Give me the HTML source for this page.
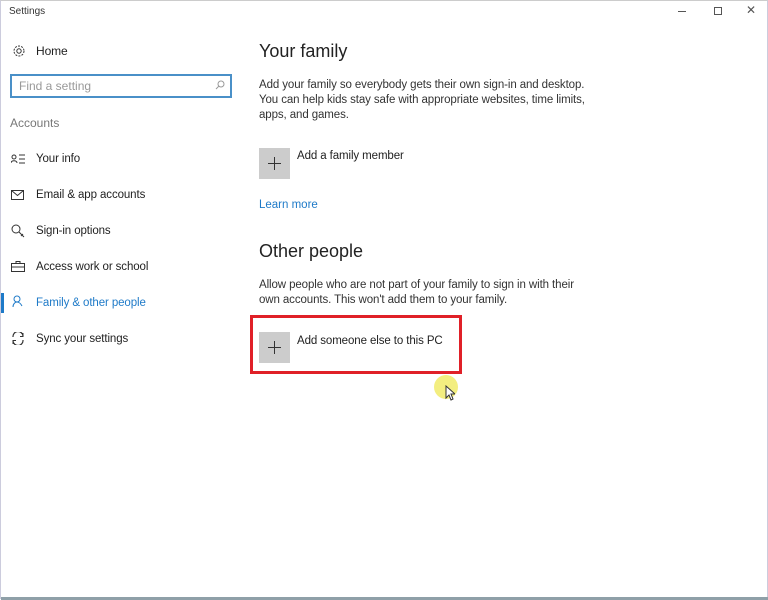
<!DOCTYPE html>
<html><head><style>
*{margin:0;padding:0;box-sizing:border-box}
body{width:768px;height:599px;background:#fff;font-family:"Liberation Sans",sans-serif;position:relative;overflow:hidden;color:#222;border-left:1px solid #ccd;border-right:1px solid #ccd;border-top:1px solid #ccc}
.a{position:absolute;white-space:nowrap}
.nav{font-size:11.5px;color:#222;letter-spacing:-0.1px}
.ic{position:absolute}
p.t{font-size:11.5px;line-height:15px;color:#333;letter-spacing:-0.1px}
.plus{position:absolute;width:31px;height:31px;background:#ccc}
.plus:before{content:"";position:absolute;left:9px;top:15px;width:13px;height:1px;background:#333}
.plus:after{content:"";position:absolute;left:15px;top:9px;width:1px;height:13px;background:#333}
</style></head><body>
<div class="a" style="left:8px;top:5px;font-size:10px;color:#333">Settings</div>
<div class="a" style="left:677px;top:10px;width:8px;height:1px;background:#555"></div>
<div class="a" style="left:713px;top:6px;width:8px;height:8px;border:1px solid #555"></div>
<div class="a" style="left:745px;top:2px;font-size:12px;color:#555">✕</div>

<svg class="ic" style="left:11px;top:43px" width="14" height="14" viewBox="0 0 14 14"><circle cx="7" cy="7" r="2.2" fill="none" stroke="#333"/><circle cx="7" cy="7" r="5" fill="none" stroke="#333" stroke-dasharray="2 1.2"/></svg>
<div class="a nav" style="left:35px;top:43px;font-size:12px">Home</div>
<div class="a" style="left:9px;top:73px;width:222px;height:24px;border:2px solid #4a90c8"></div>
<div class="a" style="left:18px;top:78px;font-size:12px;color:#999">Find a setting</div>
<svg class="ic" style="left:214px;top:79px" width="10" height="10" viewBox="0 0 10 10"><circle cx="6" cy="4" r="3" fill="none" stroke="#999"/><path d="M4 6L1 9" stroke="#999"/></svg>
<div class="a" style="left:9px;top:115px;font-size:12px;color:#777">Accounts</div>

<svg class="ic" style="left:10px;top:153px" width="14" height="10" viewBox="0 0 14 10"><circle cx="3" cy="3" r="2" fill="none" stroke="#333"/><path d="M0 9c0-3 6-3 6 0M8 1h6M8 5h6M8 9h6" fill="none" stroke="#333"/></svg>
<div class="a nav" style="left:35px;top:152px">Your info</div>
<svg class="ic" style="left:10px;top:189px" width="13" height="10" viewBox="0 0 13 10"><rect x=".5" y=".5" width="12" height="9" fill="none" stroke="#333"/><path d="M.5 .5l6 5 6-5" fill="none" stroke="#333"/></svg>
<div class="a nav" style="left:35px;top:188px">Email &amp; app accounts</div>
<svg class="ic" style="left:10px;top:223px" width="14" height="14" viewBox="0 0 14 14"><circle cx="5" cy="5" r="4" fill="none" stroke="#333"/><path d="M8 8l5 5M10 12l2-2" stroke="#333"/></svg>
<div class="a nav" style="left:35px;top:224px">Sign-in options</div>
<svg class="ic" style="left:10px;top:260px" width="14" height="11" viewBox="0 0 14 11"><rect x=".5" y="2.5" width="13" height="8" fill="none" stroke="#333"/><path d="M5 2.5V.5h4v2M.5 6h13" fill="none" stroke="#333"/></svg>
<div class="a nav" style="left:35px;top:260px">Access work or school</div>
<div class="a" style="left:0;top:292px;width:3px;height:20px;background:#1e7ac8"></div>
<svg class="ic" style="left:11px;top:294px" width="12" height="13" viewBox="0 0 12 13"><circle cx="5" cy="4" r="3" fill="none" stroke="#1e7ac8"/><path d="M1 12c0-3 2-5 4-5s4 2 5 4" fill="none" stroke="#1e7ac8"/></svg>
<div class="a nav" style="left:35px;top:296px;color:#1e7ac8">Family &amp; other people</div>
<svg class="ic" style="left:10px;top:331px" width="14" height="13" viewBox="0 0 14 13"><path d="M2 5a5 5 0 0 1 10-1M12 8a5 5 0 0 1-10 1" fill="none" stroke="#333" stroke-width="1.2"/><path d="M12 1v3.5H9M2 12V8.5h3" fill="none" stroke="#333"/></svg>
<div class="a nav" style="left:35px;top:332px">Sync your settings</div>

<div class="a" style="left:258px;top:40px;font-size:18px;color:#222">Your family</div>
<p class="t a" style="left:258px;top:77px;white-space:normal;width:332px">Add your family so everybody gets their own sign-in and desktop. You can help kids stay safe with appropriate websites, time limits, apps, and games.</p>
<div class="plus" style="left:258px;top:147px"></div>
<div class="a nav" style="left:296px;top:149px">Add a family member</div>
<div class="a" style="left:258px;top:198px;font-size:11.5px;color:#1e7ac8">Learn more</div>
<div class="a" style="left:258px;top:240px;font-size:18px;color:#222">Other people</div>
<p class="t a" style="left:258px;top:277px;white-space:normal;width:322px">Allow people who are not part of your family to sign in with their own accounts. This won't add them to your family.</p>
<div class="a" style="left:249px;top:314px;width:212px;height:59px;border:3px solid #e02028"></div>
<div class="plus" style="left:258px;top:331px"></div>
<div class="a nav" style="left:296px;top:334px">Add someone else to this PC</div>
<div class="a" style="left:433px;top:374px;width:24px;height:24px;border-radius:50%;background:#f3ee80"></div>
<svg class="ic" style="left:444px;top:384px" width="10" height="16" viewBox="0 0 10 16"><path d="M1 1v12l3-3 2 5 2-1-2-5h4z" fill="#fff" stroke="#333"/></svg>
<div class="a" style="left:0;top:596px;width:768px;height:3px;background:#8fa0a8"></div>
</body></html>
